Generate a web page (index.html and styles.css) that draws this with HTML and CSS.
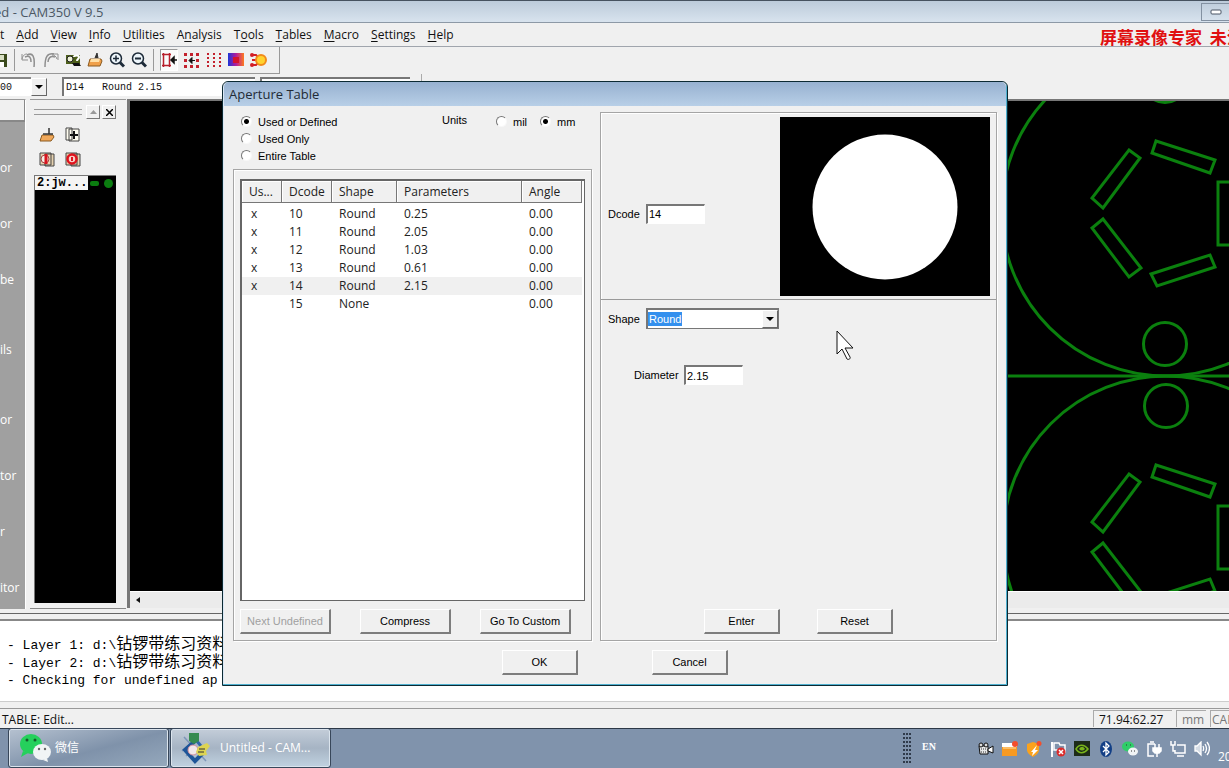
FILE: index.html
```html
<!DOCTYPE html>
<html lang="en">
<head>
<meta charset="utf-8">
<title>CAM350 V 9.5</title>
<link rel="stylesheet" href="styles.css">
</head>
<body>
<header class="titlebar">
  <span class="titlebar-text">ed - CAM350 V 9.5</span>
  <button class="minimize" aria-label="Minimize"><svg width="12" height="6" viewBox="0 0 12 6"><rect x="1" y="1" width="10" height="4" rx="1" fill="#fff" stroke="#4a5564"/></svg></button>
</header>

<nav class="menubar">
  <button class="menu">t</button>
  <button class="menu"><u>A</u>dd</button>
  <button class="menu"><u>V</u>iew</button>
  <button class="menu"><u>I</u>nfo</button>
  <button class="menu"><u>U</u>tilities</button>
  <button class="menu">A<u>n</u>alysis</button>
  <button class="menu">T<u>o</u>ols</button>
  <button class="menu"><u>T</u>ables</button>
  <button class="menu"><u>M</u>acro</button>
  <button class="menu"><u>S</u>ettings</button>
  <button class="menu"><u>H</u>elp</button>
  <span class="recorder-mark">屏幕录像专家  未注册</span>
</nav>

<div class="toolbar">
  <button class="tool tool-save" aria-label="Save"><svg width="8" height="16" viewBox="8 0 8 16"><path d="M0 2h15v13H0z" fill="#3b4a1c"/><path d="M4 3h8v5H4z" fill="#d9dfc4"/><path d="M5 10h7v5H5z" fill="#fff"/></svg></button>
  <i class="divider"></i>
  <button class="tool" aria-label="Undo"><svg width="16" height="16" viewBox="0 0 16 16" fill="none" stroke="#8f8f8f"><path d="M1 2v6h6M1 7c1-4 3-5 5-5" /><path d="M6 3c6-3 8 2 7 12M4 5c5-2 6 1 6 5" stroke-width="1.500"/></svg></button>
  <button class="tool" aria-label="Redo"><svg width="16" height="16" viewBox="0 0 16 16" fill="none" stroke="#8f8f8f"><path d="M15 2H9M15 2v6M14 7c-1-3-3-4-5-4"/><path d="M11 2C4 1 2 5 2 15M12 5C7 3 5 7 5 10" stroke-width="1.500"/></svg></button>
  <button class="tool" aria-label="Query"><svg width="16" height="16" viewBox="0 0 16 16"><path d="M1 3h14v9H1z" fill="#4d5f1b"/><circle cx="5" cy="7" r="3" fill="#eef2d4" stroke="#222"/><path d="M9 5c0-2 5-2 5 0 0 2-2 2-2 4" fill="none" stroke="#fff" stroke-width="2"/><path d="M7 11h7l2 3H9z" fill="#111"/></svg></button>
  <button class="tool" aria-label="Redraw"><svg width="16" height="16" viewBox="0 0 16 16"><path d="M3 7h11l1 2-2 5H1z" fill="#f0a04a" stroke="#8a5a20"/><path d="M4 7h9l-1 3H3z" fill="#ffe0a8"/><path d="M8 6l2-5 1 5" fill="#333" stroke="#333"/></svg></button>
  <button class="tool" aria-label="Zoom in"><svg width="16" height="16" viewBox="0 0 16 16" fill="none" stroke="#1d2a38"><circle cx="7" cy="6.500" r="5.500" fill="#edf5fa" stroke-width="1.500"/><path d="M4 6.500h6M7 3.500v6" stroke-width="1.500"/><path d="M11 10.500l4 4" stroke-width="3"/></svg></button>
  <button class="tool" aria-label="Zoom out"><svg width="16" height="16" viewBox="0 0 16 16" fill="none" stroke="#1d2a38"><circle cx="7" cy="6.500" r="5.500" fill="#edf5fa" stroke-width="1.500"/><path d="M4 6.500h6" stroke-width="2"/><path d="M11 10.500l4 4" stroke-width="3"/></svg></button>
  <i class="divider"></i>
  <button class="tool pressed" aria-label="Snap object"><svg width="16" height="16" viewBox="0 0 16 16"><path d="M2.500 1v14M8.500 1v14M1 2.500h9M1 13.500h9" fill="none" stroke="#b81f2b" stroke-width="1.500"/><path d="M16 8h-5M10 8l3-3v6z" stroke="#111" stroke-width="1.500" fill="#111"/></svg></button>
  <button class="tool" aria-label="Snap grid"><svg width="16" height="16" viewBox="0 0 16 16"><path d="M0 1h3v3H0zM6 1h3v3H6zM12 1h3v3h-3zM0 7h3v3H0zM12 7h3v3h-3zM0 13h3v3H0zM6 13h3v3H6zM12 13h3v3h-3z" fill="#c3202c"/><path d="M11 8.500H6M5 8.500l3-3v6z" stroke="#111" fill="#111"/></svg></button>
  <button class="tool" aria-label="Grid"><svg width="16" height="16" viewBox="0 0 16 16"><path d="M1 2h14M1 6h14M1 10h14M1 14h14" stroke="#c3202c" stroke-width="2" stroke-dasharray="2 4"/></svg></button>
  <button class="tool" aria-label="Colors"><svg width="16" height="16" viewBox="0 0 16 16"><defs><linearGradient id="hue"><stop offset="0" stop-color="#1c35d8"/><stop offset=".5" stop-color="#b31a9c"/><stop offset="1" stop-color="#ff7a1e"/></linearGradient></defs><path d="M0 1h16v13H0z" fill="url(#hue)"/><path d="M5 5h6v6H5z" fill="#d3122e"/></svg></button>
  <button class="tool" aria-label="Highlight"><svg width="17" height="16" viewBox="0 0 17 16"><path d="M2 3h4l3 3M2 13h4l3-3M2 8h5" fill="none" stroke="#d31e24" stroke-width="2"/><circle cx="2" cy="3" r="2" fill="#d31e24"/><circle cx="2" cy="13" r="2" fill="#d31e24"/><circle cx="11" cy="8" r="5" fill="#ffd22e" stroke="#f18a1a" stroke-width="2"/></svg></button>
</div>

<div class="options">
  <select class="grid-size" aria-label="Grid size"><option>00</option></select>
  <span class="drop"></span>
  <input class="dcode-box" aria-label="Current aperture" value="D14   Round 2.15">
  <span class="layer-box"></span>
  <i class="options-end"></i>
</div>

<main class="workspace">
  <aside class="launch">
    <div class="launch-head"></div>
    <ul class="launch-list">
      <li>or</li><li>or</li><li>be</li><li class="spaced">ils</li><li class="spaced">or</li><li>tor</li><li>r</li><li>itor</li>
    </ul>
  </aside>
  <aside class="layers">
    <div class="layers-head">
      <span class="grip"></span>
      <button class="mini" aria-label="Collapse"><svg width="7" height="4" viewBox="0 0 7 4"><path d="M0 4h7L3.500 0z" fill="#999"/></svg></button>
      <button class="mini" aria-label="Close"><svg width="7" height="7" viewBox="0 0 7 7"><path d="M0 0l7 7M7 0L0 7" stroke="#000" stroke-width="1.500"/></svg></button>
    </div>
    <div class="layer-tools">
      <button class="tool" aria-label="Clear"><svg width="16" height="16" viewBox="0 0 16 16"><path d="M3 8h11l1 2-3 4H1z" fill="#f0a85a" stroke="#8a5a20"/><path d="M4 7h10M10 1v6" fill="none" stroke="#333" stroke-width="1.500"/></svg></button>
      <button class="tool" aria-label="Add layer"><svg width="16" height="16" viewBox="0 0 16 16"><path d="M1 1h6v12H1zM4 2h10v12H4z" fill="#fffdf0" stroke="#444"/><path d="M5 8h8M9 4v8" stroke="#111" stroke-width="2"/></svg></button>
      <button class="tool" aria-label="Layer on"><svg width="16" height="16" viewBox="0 0 16 16"><path d="M6 2h9v12H6zM1 1h11v12H1z" fill="#e6d2b0" stroke="#444"/><circle cx="6" cy="7" r="4" fill="#f4eee4" stroke="#a44"/><path d="M7 2v10" stroke="#d9141e" stroke-width="3"/></svg></button>
      <button class="tool" aria-label="Layer off"><svg width="16" height="16" viewBox="0 0 16 16"><path d="M6 2h9v12H6zM1 1h11v12H1z" fill="#e6d2b0" stroke="#444"/><circle cx="7" cy="7" r="4.500" fill="#f6d0c8" stroke="#e0121c" stroke-width="2.500"/><path d="M7 5v4" stroke="#e0121c" stroke-width="2"/></svg></button>
    </div>
    <div class="layer-list">
      <div class="layer-row"><span class="layer-name">2:jw...</span><i class="trace"></i><i class="pad"></i></div>
    </div>
  </aside>
  <section class="view">
    <div class="canvas">
      <svg class="artwork" width="222" height="490" viewBox="1007 101 222 490" fill="none" stroke="#0b800e" stroke-width="3">
        <circle cx="1166" cy="211.500" r="164.500"/>
        <circle cx="1166" cy="539" r="163"/>
        <path d="M1007 376h222"/>
        <circle cx="1165" cy="81" r="21.500"/>
        <circle cx="1165" cy="344" r="21.500"/>
        <circle cx="1166" cy="406" r="21.500"/>
        <g id="slots">
          <path d="M1156 141l59 19-5 13-58-20z"/>
          <path d="M1129 150l11 8-37 50-11-10z"/>
          <path d="M1103 219l38 49-12 9-37-49z"/>
          <path d="M1210 255l5 12-58 19-6-12z"/>
          <path d="M1218 182h20v63h-20z"/>
        </g>
        <use href="#slots" y="324"/>
      </svg>
    </div>
    <div class="hscroll"><svg width="4" height="6" viewBox="0 0 4 6"><path d="M4 0v6L0 3z" fill="#111"/></svg></div>
  </section>
</main>

<div class="splitter"></div>
<section class="log">
  <p>- Layer 1: d:\<span class="han">钻锣带练习资料</span></p>
  <p>- Layer 2: d:\<span class="han">钻锣带练习资料</span></p>
  <p>- Checking for undefined ap</p>
</section>
<footer class="status">
  <span class="status-text">TABLE: Edit...</span>
  <span class="cell coords">71.94:62.27</span>
  <span class="cell unit">mm</span>
  <span class="cell mode">CAM</span>
</footer>

<div class="taskbar">
  <button class="task"><svg width="34" height="32" viewBox="0 0 34 32"><ellipse cx="13" cy="12" rx="11" ry="10" fill="#25d05c"/><path d="M5 19l-2 6 7-4z" fill="#25d05c"/><circle cx="9" cy="8" r="1.500" fill="#145c2b"/><circle cx="17" cy="8" r="1.500" fill="#145c2b"/><ellipse cx="24" cy="20" rx="9" ry="8" fill="#f1f4f5"/><path d="M29 26l1 4-5-2z" fill="#f1f4f5"/><circle cx="21" cy="17" r="1.200" fill="#666"/><circle cx="27" cy="17" r="1.200" fill="#666"/></svg><span>微信</span></button>
  <button class="task active"><svg width="32" height="32" viewBox="0 0 32 32"><path d="M4 5l22 24M2 19l14-12M6 24l10-9" stroke="#7d95b8" stroke-width="1.500"/><path d="M15 9l-10 9 10 11 9-9" fill="none" stroke="#1e5598" stroke-width="4"/><path d="M16 8l5 6" stroke="#2f66a8" stroke-width="3"/><path d="M9 1h10v8l-5 3-5-3z" fill="#368b50"/><circle cx="13" cy="18" r="5" fill="#f1e7ea" stroke="#d4909c"/><path d="M18 15l9-4 3 3-4 5 1 4-8 1-3-4z" fill="#ddd452"/><path d="M19 17h6M18 20h6" stroke="#333"/></svg><span>Untitled - CAM...</span></button>
  <div class="tray">
    <i class="tray-grip"></i>
    <span class="lang">EN</span>
    <div class="tray-icons">
      <svg width="16" height="16" viewBox="0 0 16 16"><path d="M1 5h9v8H2z" fill="#e8e8e8" stroke="#111"/><circle cx="3" cy="4" r="2" fill="#ddd" stroke="#111"/><circle cx="8" cy="4" r="2" fill="#ddd" stroke="#111"/><path d="M10 8l5-3v7l-5-2z" fill="#fff" stroke="#111"/><path d="M3 8h5M3 11h5" stroke="#333" stroke-dasharray="1 1"/></svg>
      <svg width="16" height="16" viewBox="0 0 16 16"><path d="M0 2h15v4H0z" fill="#fff"/><path d="M0 6h15v9H0z" fill="#f79a22"/><path d="M1 7h13" stroke="#ffe1a8"/><circle cx="13" cy="3" r="3" fill="#f34e2b"/></svg>
      <svg width="16" height="16" viewBox="0 0 16 16"><path d="M1 3l6-2 6 2v6c0 3-3 5-6 7-3-2-6-4-6-7z" fill="#fba21c"/><path d="M5 11l6-7-2 5h3l-6 6 1-4z" fill="#fff"/><circle cx="13" cy="2.500" r="2.500" fill="#f34e2b"/></svg>
      <svg width="16" height="16" viewBox="0 0 16 16"><path d="M2 1v15" stroke="#fff" stroke-width="2"/><path d="M4 2h5l1 2h5v7H9L8 9H4z" fill="none" stroke="#fff" stroke-width="1.500"/><circle cx="11" cy="11" r="4.500" fill="#da2c2c"/><path d="M9 9l4 4M13 9l-4 4" stroke="#fff" stroke-width="1.500"/></svg>
      <svg width="16" height="16" viewBox="0 0 16 16"><path d="M0 0h16v15H0z" fill="#1d2b18"/><path d="M2 8c3-5 8-5 12 0-4 5-9 5-12 0z" fill="none" stroke="#79b51c" stroke-width="1.500"/><path d="M5 8c2-3 4-3 6 0-2 2-4 2-6 0" fill="#79b51c"/></svg>
      <svg width="16" height="16" viewBox="0 0 16 16"><ellipse cx="8" cy="8" rx="6" ry="8" fill="#123f86"/><path d="M5 5l6 6-3 3V2l3 3-6 6" fill="none" stroke="#fff" stroke-width="1.300"/></svg>
      <svg width="16" height="16" viewBox="0 0 16 16"><ellipse cx="6" cy="5.500" rx="6" ry="5" fill="#2fce69"/><ellipse cx="11" cy="10.500" rx="5" ry="4" fill="#f1f4f5"/><path d="M4 4h1M8 4h1M9 10h1M12 10h1" stroke="#333"/></svg>
      <svg width="16" height="16" viewBox="0 0 16 16" fill="none" stroke="#fff" stroke-width="1.500"><path d="M8 15H2V3h7M4 1h4"/><path d="M9 3v4M13 3v4M7 7h8v3l-2 2H9l-2-2zM11 12v4" fill="#fff"/></svg>
      <svg width="16" height="16" viewBox="0 0 16 16" fill="none" stroke="#fff" stroke-width="1.500"><path d="M7 4h8v8H5V9M7 15h7"/><path d="M1 0v4h4V0M3 4v6h2"/></svg>
      <svg width="16" height="16" viewBox="0 0 16 16" fill="none" stroke="#fff" stroke-width="1.300"><path d="M1 5h2l4-4v13l-4-4H1z" fill="#d5dce5"/><path d="M9 5c1 2 1 3 0 5M11 3c2 3 2 6 0 9M13 1c3 4 3 9 0 13"/></svg>
    </div>
    <span class="clock">20</span>
  </div>
</div>

<section class="dialog" role="dialog" aria-labelledby="dialog-title">
  <h1 class="dialog-title" id="dialog-title">Aperture Table</h1>
  <div class="dialog-body">
    <div class="columns">
      <div class="left">
        <div class="filters">
          <div class="filter-set">
            <label class="radio"><input type="radio" name="filter" checked>Used or Defined</label>
            <label class="radio"><input type="radio" name="filter">Used Only</label>
            <label class="radio"><input type="radio" name="filter">Entire Table</label>
          </div>
          <div class="units">
            <span class="units-label">Units</span>
            <label class="radio"><input type="radio" name="units">mil</label>
            <label class="radio"><input type="radio" name="units" checked>mm</label>
          </div>
        </div>
        <div class="group list-group">
          <div class="list">
            <table>
              <colgroup><col class="c-used"><col class="c-dcode"><col class="c-shape"><col class="c-params"><col></colgroup>
              <thead><tr><th>Us...</th><th>Dcode</th><th>Shape</th><th>Parameters</th><th>Angle</th></tr></thead>
              <tbody>
                <tr><td>x</td><td>10</td><td>Round</td><td>0.25</td><td>0.00</td></tr>
                <tr><td>x</td><td>11</td><td>Round</td><td>2.05</td><td>0.00</td></tr>
                <tr><td>x</td><td>12</td><td>Round</td><td>1.03</td><td>0.00</td></tr>
                <tr><td>x</td><td>13</td><td>Round</td><td>0.61</td><td>0.00</td></tr>
                <tr class="current"><td>x</td><td>14</td><td>Round</td><td>2.15</td><td>0.00</td></tr>
                <tr><td></td><td>15</td><td>None</td><td></td><td>0.00</td></tr>
              </tbody>
            </table>
          </div>
          <div class="list-actions">
            <button class="btn wide" disabled>Next Undefined</button>
            <button class="btn wide">Compress</button>
            <button class="btn wide">Go To Custom</button>
          </div>
        </div>
      </div>
      <div class="group detail">
        <div class="detail-top">
          <div class="field"><label for="dcode">Dcode</label><input id="dcode" class="text" value="14"></div>
          <div class="preview"><svg width="146" height="146" viewBox="0 0 146 146"><circle cx="73" cy="73" r="72.500" fill="#fff"/></svg></div>
        </div>
        <div class="detail-form">
          <div class="field"><label for="shape">Shape</label><span class="combo"><select id="shape"><option>Round</option></select><span class="drop"></span></span></div>
          <div class="field diameter"><label for="diameter">Diameter</label><input id="diameter" class="text" value="2.15"></div>
        </div>
        <div class="detail-actions">
          <button class="btn">Enter</button>
          <button class="btn">Reset</button>
        </div>
      </div>
    </div>
    <div class="dialog-actions">
      <button class="btn">OK</button>
      <button class="btn">Cancel</button>
    </div>
  </div>
  <svg class="pointer" width="20" height="32" viewBox="0 0 20 32"><path d="M1 1v23l5-5 5 10c1 1 4 0 3-2l-5-9h8z" fill="#fff" stroke="#111"/></svg>
</section>
</body>
</html>
```
FILE: styles.css
```css
* { box-sizing: border-box; }

body {
  margin: 0;
  height: 100vh;
  position: relative;
  display: flex;
  flex-direction: column;
  overflow: hidden;
  background: #f0f0f0;
  color: #111;
  font: 12px/16px "Open Sans", "Noto Sans CJK SC", sans-serif;
}

button, input, select {
  font: inherit;
  color: inherit;
  margin: 0;
  padding: 0;
  border: 0;
  border-radius: 0;
  background: none;
  appearance: none;
}

svg { display: block; flex: none; }

/* Window chrome */
.titlebar {
  display: flex;
  align-items: center;
  justify-content: space-between;
  height: 23px;
  border-top: 1px solid #46525f;
  border-bottom: 1px solid #8d99a6;
  background: linear-gradient(#bccbda, #d8e3ee);
  color: #4c5864;
  font-size: 13px;
}
.titlebar-text { margin-left: -6px; }
.minimize {
  width: 28px;
  height: 18px;
  display: flex;
  align-items: center;
  justify-content: center;
  border: 1px solid #8391a1;
  border-right: 0;
}

.menubar {
  display: flex;
  align-items: center;
  gap: 12px;
  height: 24px;
  border-bottom: 1px solid #a0a5ad;
  white-space: nowrap;
}
.menu u { text-underline-offset: 2px; }
.recorder-mark {
  width: 129px;
  margin-left: auto;
  padding-top: 5px;
  overflow: hidden;
  color: #e01010;
  font: bold 17px/22px "Noto Sans CJK SC", sans-serif;
  white-space: pre;
}

.toolbar {
  display: flex;
  align-items: center;
  align-self: flex-start;
  gap: 6px;
  height: 27px;
  padding-right: 12px;
  border-right: 1px solid #999;
  border-bottom: 1px solid #999;
}
.tool { display: flex; align-items: center; justify-content: center; }
.divider { width: 1px; height: 22px; background: #999; }
.pressed {
  width: 18px;
  height: 22px;
  border: 1px solid #999;
  border-right-color: #fff;
  border-bottom-color: #fff;
  background: #fafafa;
}

.options {
  display: flex;
  align-items: center;
  height: 25px;
  font: 10px/14px "Liberation Mono", monospace;
}
.grid-size {
  width: 31px;
  height: 19px;
  border-top: 2px solid #888;
  background: #fff;
}
.drop {
  width: 16px;
  height: 18px;
  display: flex;
  align-items: center;
  justify-content: center;
  border: 1px solid #fff;
  border-right-color: #666;
  border-bottom-color: #666;
  background: #f0f0f0;
}
.drop::after {
  content: "";
  border: 4px solid transparent;
  border-top-color: #000;
  border-bottom: 0;
}
.dcode-box, .layer-box {
  height: 19px;
  border-top: 2px solid #777;
  border-left: 2px solid #777;
  background: #fff;
}
.dcode-box { width: 193px; margin-left: 15px; padding-left: 2px; white-space: pre; }
.layer-box { width: 150px; margin-left: 5px; }
.options-end { width: 12px; height: 25px; border-right: 1px solid #aaa; }

/* Workspace */
.workspace { flex: 1; min-height: 0; display: flex; }
.launch {
  width: 26px;
  display: flex;
  flex-direction: column;
  overflow: hidden;
  margin-bottom: 4px;
  border-top: 1px solid #999;
  border-right: 1px solid #fff;
}
.launch-head { flex: none; height: 22px; border-right: 1px solid #888; border-bottom: 2px solid #888; }
.launch-list {
  flex: 1;
  margin: 0;
  padding: 38px 0 0;
  list-style: none;
  background: #a0a0a0;
  color: #fff;
}
.launch-list li { height: 16px; margin-bottom: 40px; }
.launch-list .spaced { margin-top: 54px; }

.layers {
  width: 96px;
  margin: 0 1px 4px 4px;
  padding: 4px 10px 5px 4px;
  display: flex;
  flex-direction: column;
  border-top: 1px solid #999;
  border-bottom: 1px solid #888;
}
.layers-head { display: flex; align-items: center; gap: 2px; height: 16px; }
.grip { flex: 1; height: 6px; margin-right: 2px; border: 1px solid #999; border-width: 1px 0; }
.mini {
  width: 14px;
  height: 14px;
  display: flex;
  align-items: center;
  justify-content: center;
  border: 1px solid #fff;
  border-right-color: #777;
  border-bottom-color: #777;
}
.layer-tools {
  display: grid;
  grid-template-columns: 16px 16px;
  gap: 9px 10px;
  padding: 7px 5px 7px;
}
.layer-list { flex: 1; border: 1px solid #777; border-right: 0; border-bottom: 0; background: #000; }
.layer-row { display: flex; align-items: center; gap: 5px; height: 14px; }
.layer-name {
  padding-left: 2px;
  width: 53px;
  background: #f4f4f4;
  color: #000;
  font: bold 12px/14px "Liberation Mono", monospace;
}
.trace { width: 9px; height: 5px; border-radius: 2px; background: #0b7d10; margin-left: -3px; }
.pad { width: 9px; height: 9px; border-radius: 50%; background: #0b7d10; }

.view {
  flex: 1;
  min-width: 0;
  display: flex;
  flex-direction: column;
  margin-bottom: 5px;
  border-top: 2px solid #777;
  border-left: 3px solid #777;
}
.canvas { flex: 1; display: flex; justify-content: flex-end; overflow: hidden; background: #000; }
.hscroll { height: 17px; display: flex; align-items: center; padding-left: 6px; background: #ebebeb; border-top: 1px solid #fff; }

.splitter { height: 8px; border-top: 1px solid #666; border-bottom: 2px solid #888; }
.log {
  height: 81px;
  padding: 15px 0 0 7px;
  overflow: hidden;
  border-bottom: 1px solid #ccc;
  background: #fff;
  color: #000;
  font: 13px/18px "Liberation Mono", "Noto Sans CJK SC", monospace;
  white-space: nowrap;
}
.log p { margin: 0; height: 18px; }
.han { font-size: 16px; }

.status {
  display: flex;
  align-items: center;
  gap: 4px;
  height: 20px;
  margin-top: 6px;
  border-top: 1px solid #999;
}
.status-text { flex: 1; padding-left: 2px; padding-top: 3px; }
.cell { height: 17px; padding: 1px 5px; border: 1px solid #aaa; border-right: 0; border-bottom: 0; }
.coords { width: 79px; }
.unit { width: 30px; color: #777; }
.mode { width: 19px; padding-left: 1px; overflow: hidden; color: #777; }

/* Taskbar */
.taskbar {
  display: flex;
  gap: 3px;
  height: 40px;
  padding-left: 9px;
  border-top: 1px solid #2c3846;
  background: #8093ac;
}
.task {
  width: 159px;
  height: 38px;
  display: flex;
  align-items: center;
  padding-left: 8px;
  gap: 3px;
  border: 1px solid #dbe4ed;
  border-radius: 2px;
  outline: 1px solid #38475a;
  outline-offset: 0;
  background: linear-gradient(165deg, #b4c0cf, #7f92aa 55%, #95a8bc);
  color: #fff;
}
.active { background: linear-gradient(#c2ccd8, #a6b4c4 50%, #bfd0df); gap: 8px; }
.tray { flex: 1; display: flex; align-items: center; justify-content: flex-end; color: #fff; }
.tray-grip {
  width: 9px;
  height: 32px;
  background: radial-gradient(circle at 1px 1px, #303b4b 1px, transparent 1px) 0 0 / 3px 4px;
}
.lang { width: 12px; margin: 0 44px 4px 10px; font: bold 10px/14px "Liberation Serif", serif; white-space: nowrap; }
.tray-icons { display: flex; gap: 8px; }
.clock { width: 11px; margin-left: 8px; padding-top: 17px; overflow: hidden; }

/* Aperture dialog */
.dialog {
  position: absolute;
  top: 81px;
  left: 222px;
  right: 221px;
  height: 605px;
  display: flex;
  flex-direction: column;
  border: 1px solid #0c2a33;
  border-radius: 6px 6px 0 0;
  background: #f0f0f0;
  box-shadow: inset -1px -1px #4fb0cf, inset 1px 1px #dbe8f5;
  font: 11px/14px "Liberation Sans", Arial, sans-serif;
  color: #000;
}
.dialog-title {
  margin: 0 1px;
  height: 24px;
  padding: 1px 5px;
  border-radius: 5px 5px 0 0;
  background: linear-gradient(#97b1d0, #b8cfe7);
  color: #222b36;
  font: 13px/22px "Open Sans", sans-serif;
}
.dialog-body { flex: 1; display: flex; flex-direction: column; padding: 6px 10px 10px; }
.columns { flex: 1; display: flex; gap: 8px; }
.left { width: 359px; display: flex; flex-direction: column; }
.filters { display: flex; height: 57px; padding: 1px 8px 0; }
.filter-set { display: flex; flex-direction: column; width: 205px; }
.units { display: flex; flex: 1; height: 17px; }
.units-label { width: 54px; line-height: 15px; }
.radio { display: flex; align-items: center; gap: 6px; height: 17px; }
.units .radio { width: 44px; }
.radio input {
  width: 11px;
  height: 11px;
  border: 1px solid #777;
  border-right-color: #f8f8f8;
  border-bottom-color: #f8f8f8;
  border-radius: 50%;
  background: #fff;
}
.radio input:checked { background: radial-gradient(circle, #000 2px, #fff 3px); }

.group { border: 1px solid #a5a5a5; box-shadow: 1px 1px #fff, inset 1px 1px #fff; }
.list-group { flex: 1; display: flex; flex-direction: column; gap: 8px; padding: 9px 6px 6px; }
.list {
  flex: 1;
  border: 1px solid #666;
  border-top-width: 2px;
  border-left-width: 2px;
  padding-right: 2px;
  background: #fff;
  color: #222;
  font: 12px/18px "Open Sans", sans-serif;
}
.list table { width: 100%; table-layout: fixed; border-collapse: separate; border-spacing: 0; }
.c-used { width: 40px; }
.c-dcode { width: 50px; }
.c-shape { width: 65px; }
.c-params { width: 125px; }
.list th {
  height: 22px;
  padding: 0 0 0 7px;
  border-right: 1px solid #777;
  border-bottom: 1px solid #777;
  background: #f0f0f0;
  box-shadow: inset 1px 1px #fff;
  font-weight: 400;
  text-align: left;
}
.list td { height: 18px; padding: 0 0 0 7px; }
.list td:first-child { padding-left: 9px; }
.list tbody tr:first-child td { height: 20px; padding-top: 2px; }
.current td { background: #f0f0f0; }
.list-actions { display: flex; justify-content: space-between; padding-right: 14px; }

.btn {
  width: 76px;
  height: 25px;
  border: 1px solid #fff;
  border-right: 2px solid #7d7d7d;
  border-bottom: 2px solid #7d7d7d;
  background: #f0f0f0;
  text-align: center;
}
.wide { width: 91px; }
.btn:disabled { color: #a0a0a0; }

.detail { flex: 1; display: flex; flex-direction: column; }
.detail-top {
  display: flex;
  align-items: center;
  justify-content: space-between;
  padding: 4px 6px 3px 7px;
  border-bottom: 1px solid #999;
}
.field { display: flex; align-items: center; }
.field label { width: 38px; }
.text {
  width: 59px;
  height: 20px;
  padding-left: 1px;
  border: 1px solid #fff;
  border-top: 2px solid #777;
  border-left: 2px solid #777;
  background: #fff;
}
.detail-top .field { padding-top: 14px; }
.preview {
  width: 210px;
  height: 179px;
  display: flex;
  align-items: center;
  justify-content: center;
  background: #000;
}
.detail-form { flex: 1; padding: 8px 7px; }
.combo {
  width: 133px;
  height: 21px;
  display: flex;
  align-items: center;
  border: 1px solid #777;
  border-width: 2px 1px 1px 2px;
  background: #fff;
}
.combo select {
  flex: 1;
  height: 14px;
  padding-left: 1px;
  background: linear-gradient(#3390ee, #3390ee) 0 0 / 34px 14px no-repeat;
  color: #fff;
}
.diameter { margin: 36px 0 0 26px; }
.diameter label { width: 50px; }
.detail-actions { display: flex; justify-content: center; gap: 37px; padding: 0 0 6px; }
.dialog-actions { display: flex; justify-content: center; gap: 74px; padding: 9px 0 0; }

.pointer { position: absolute; left: 613px; top: 248px; }
```
